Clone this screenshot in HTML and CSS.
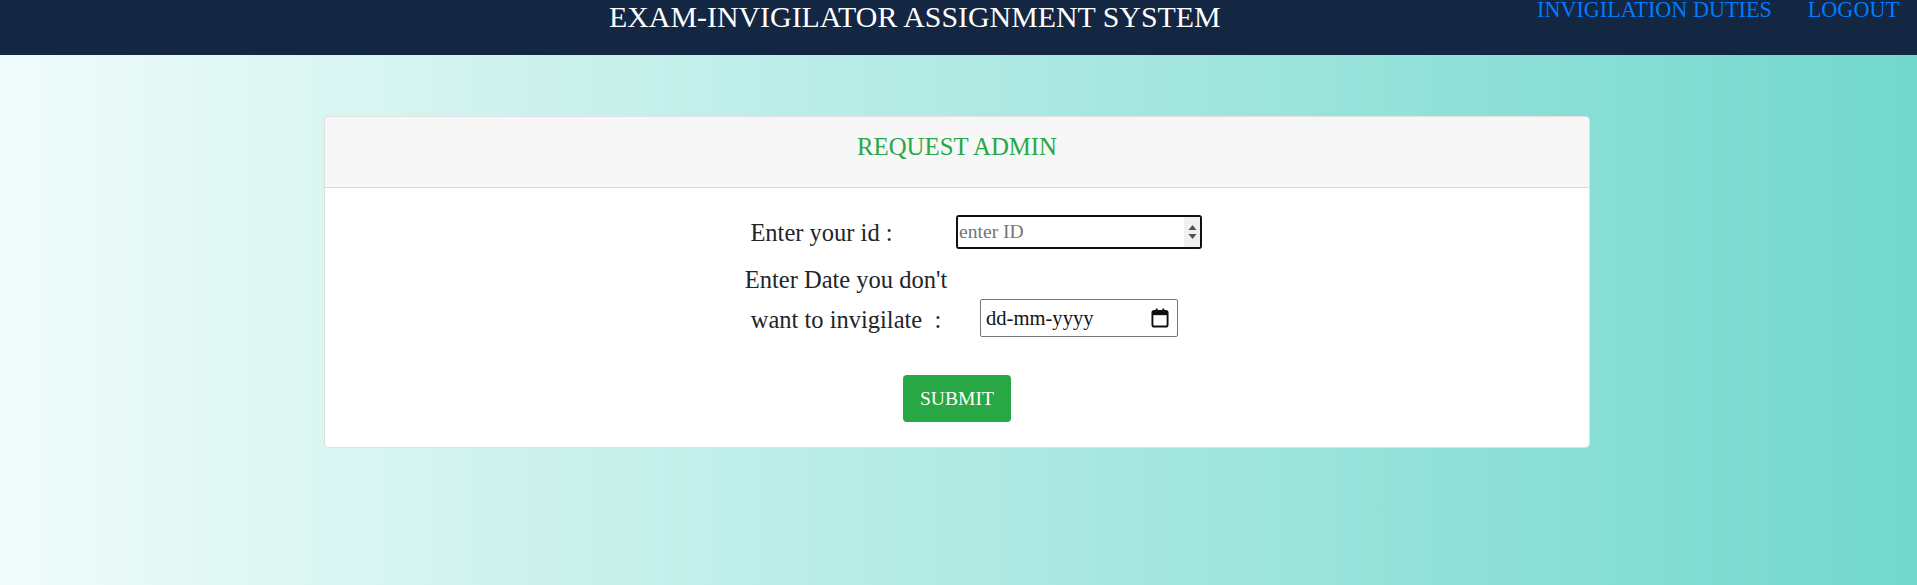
FILE: index.html
```html
<!DOCTYPE html>
<html lang="en">
<head>
  <meta charset="UTF-8" />
  <meta name="viewport" content="width=device-width, initial-scale=1.0" />
  <title>Request Admin</title>
  <link rel="stylesheet" href="styles.css">
</head>
<body>
  <nav class="navbar">
    <div class="brand">EXAM-INVIGILATOR ASSIGNMENT SYSTEM</div>
    <div class="links">
      <a href="#">INVIGILATION DUTIES</a>
      <a href="#">LOGOUT</a>
    </div>
  </nav>

  <div class="card">
    <div class="card-header">REQUEST ADMIN</div>
    <form class="card-body">
      <div class="fields">
        <label class="label label-id" for="uid">Enter your id :</label>
        <div class="id-field">
          <input id="uid" type="text" placeholder="enter ID" />
          <span class="spin">
            <svg width="9" height="18" viewBox="0 0 9 18"><path d="M4.5 2 L8.5 7 H0.5 Z M0.5 11 H8.5 L4.5 16 Z" fill="#505050"/></svg>
          </span>
        </div>

        <label class="label" for="day">Enter Date you don't<br>want to invigilate&nbsp; :</label>
        <div class="date-field">
          <input id="day" type="text" placeholder="dd-mm-yyyy" />
          <svg class="cal" width="18" height="20" viewBox="0 0 19 21">
            <rect x="5" y="0.5" width="2" height="4" fill="#111"/>
            <rect x="12" y="0.5" width="2" height="4" fill="#111"/>
            <rect x="1.5" y="3" width="16" height="16.5" rx="2" fill="none" stroke="#111" stroke-width="2"/>
            <rect x="1.5" y="3" width="16" height="4.5" fill="#111"/>
          </svg>
        </div>
      </div>
      <button type="button" class="submit">SUBMIT</button>
    </form>
  </div>
</body>
</html>
```

FILE: styles.css
```css
body {
  margin: 0;
  min-height: 100vh;
  font-family: "Liberation Serif", "Times New Roman", serif;
  color: #212529;
  background: linear-gradient(to right, #f0fcfa, #72d8cd);
}
.navbar {
  display: flex;
  align-items: flex-start;
  height: 55px;
  background: #132642;
}
.brand {
  margin-left: 609px;
  font-size: 29.9px;
  line-height: 33px;
  color: #fff;
  white-space: nowrap;
}
.links {
  display: flex;
  gap: 36px;
  margin-left: auto;
  padding-right: 18px;
}
.links a {
  font-size: 22.2px;
  line-height: 20px;
  color: #007bff;
  text-decoration: none;
  white-space: nowrap;
}
.card {
  width: 1264px;
  margin: 61px 0 0 324px;
  background: #fff;
  border: 1px solid rgba(0, 0, 0, 0.125);
  border-radius: 5px;
  overflow: hidden;
}
.card-header {
  padding: 12px 0 22px;
  background: #f7f7f7;
  border-bottom: 1px solid rgba(0, 0, 0, 0.125);
  text-align: center;
  font-size: 24.8px;
  line-height: 36px;
  color: #28a745;
}
.card-body {
  display: flex;
  flex-direction: column;
  align-items: center;
  padding: 25px 0 25px;
  margin: 0;
}
.fields {
  display: grid;
  grid-template-columns: 244px 222px;
  justify-items: center;
  align-items: last baseline;
  row-gap: 7px;
}
.label {
  font-size: 24.5px;
  line-height: 40px;
  text-align: center;
  white-space: nowrap;
}
.label-id {
  padding-right: 49px;
}
.id-field {
  display: flex;
  box-sizing: border-box;
  width: 246px;
  height: 34px;
  border: 2px solid #101010;
  border-radius: 3px;
  overflow: hidden;
}
.id-field input {
  flex: 1;
  min-width: 0;
  border: 0;
  outline: 0;
  padding: 0 1px;
  font-family: inherit;
  font-size: 19.6px;
}
.id-field input::placeholder {
  color: #757575;
}
.spin {
  display: flex;
  align-items: center;
  justify-content: center;
  width: 16px;
  background: #f0f0f0;
}
.date-field {
  display: flex;
  align-items: center;
  box-sizing: border-box;
  width: 198px;
  height: 38px;
  padding: 0 8px 0 5px;
  border: 1px solid #767676;
  border-radius: 2px;
  background: #fff;
}
.date-field input {
  flex: 1;
  min-width: 0;
  border: 0;
  outline: 0;
  padding: 0;
  font-family: inherit;
  font-size: 20.6px;
}
.date-field input::placeholder {
  color: #111;
}
.cal {
  flex: none;
}
.submit {
  margin-top: 35px;
  padding: 9px 17px;
  font-family: inherit;
  font-size: 19.6px;
  line-height: 29px;
  color: #fff;
  background: #28a745;
  border: 0;
  border-radius: 4px;
  cursor: pointer;
}
```
